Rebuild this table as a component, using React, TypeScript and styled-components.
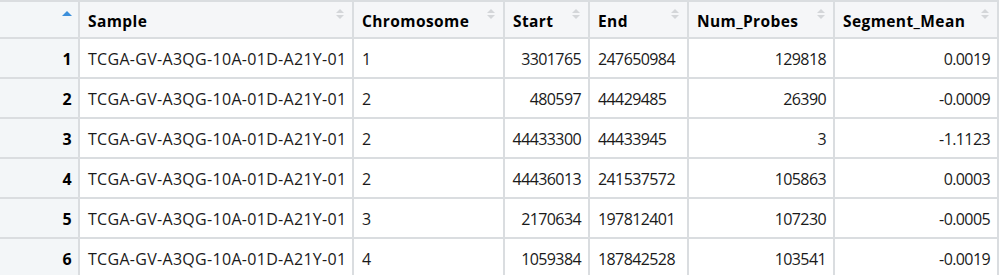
import { Fragment } from 'react';
import styled, { createGlobalStyle } from 'styled-components';

const GlobalStyle = createGlobalStyle`
  body {
    margin: 0;
    background: #ffffff;
    font-family: "Open Sans", "Noto Sans", sans-serif;
  }
`;

const columns = [
  { key: 'Sample', align: 'left', numeric: false },
  { key: 'Chromosome', align: 'left', numeric: false },
  { key: 'Start', align: 'right', numeric: true },
  { key: 'End', align: 'left', numeric: true },
  { key: 'Num_Probes', align: 'right', numeric: true },
  { key: 'Segment_Mean', align: 'right', numeric: true },
] as const;

const rows = [
  ['TCGA-GV-A3QG-10A-01D-A21Y-01', '1', '3301765', '247650984', '129818', '0.0019'],
  ['TCGA-GV-A3QG-10A-01D-A21Y-01', '2', '480597', '44429485', '26390', '-0.0009'],
  ['TCGA-GV-A3QG-10A-01D-A21Y-01', '2', '44433300', '44433945', '3', '-1.1123'],
  ['TCGA-GV-A3QG-10A-01D-A21Y-01', '2', '44436013', '241537572', '105863', '0.0003'],
  ['TCGA-GV-A3QG-10A-01D-A21Y-01', '3', '2170634', '197812401', '107230', '-0.0005'],
  ['TCGA-GV-A3QG-10A-01D-A21Y-01', '4', '1059384', '187842528', '103541', '-0.0019'],
];

const Grid = styled.div`
  display: grid;
  grid-template-columns: 78px 272px 149px 83px 97px 144px 162px;
  grid-auto-rows: 38px;
  grid-template-rows: 35px;
  gap: 2px;
  padding: 2px 2px 0 0;
  width: max-content;
  background: #dadde0;
`;

const HeadCell = styled.div`
  position: relative;
  display: flex;
  align-items: center;
  padding: 3px 8px 0;
  background: #f5f6f8;
  font-weight: 700;
  font-size: 15.5px;
  letter-spacing: 0.4px;
  color: #000;
`;

const IndexHead = styled(HeadCell)`
  background: #f3f6f8;
`;

const SortUp = styled.span`
  position: absolute;
  top: 9px;
  right: 6px;
  width: 0;
  height: 0;
  border-left: 5px solid transparent;
  border-right: 5px solid transparent;
  border-bottom: 5px solid #3b8fdb;
`;

const SortBoth = styled.span`
  position: absolute;
  top: 7px;
  right: 8px;
  display: flex;
  flex-direction: column;
  gap: 2px;
  &::before,
  &::after {
    content: '';
    width: 0;
    height: 0;
    border-left: 4px solid transparent;
    border-right: 4px solid transparent;
  }
  &::before {
    border-bottom: 4px solid #d4d6d9;
  }
  &::after {
    border-top: 4px solid #d4d6d9;
  }
`;

const Cell = styled.div<{ $align: 'left' | 'right'; $numeric?: boolean }>`
  display: flex;
  align-items: center;
  justify-content: ${(p) => (p.$align === 'right' ? 'flex-end' : 'flex-start')};
  padding: 2px ${(p) => (p.$align === 'right' ? '7px' : '8px')} 0 8px;
  background: #ffffff;
  font-size: 16px;
  letter-spacing: ${(p) => (p.$numeric ? '-0.6px' : '0.3px')};
  color: #1a1a1a;
  white-space: nowrap;
  overflow: hidden;
`;

const IndexCell = styled(Cell)`
  background: #f3f6f8;
  font-weight: 700;
  color: #000;
`;

export default function App() {
  return (
    <>
      <GlobalStyle />
      <Grid>
        <IndexHead>
          <SortUp />
        </IndexHead>
        {columns.map((c) => (
          <HeadCell key={c.key}>
            {c.key}
            <SortBoth />
          </HeadCell>
        ))}
        {rows.map((r, i) => (
          <Fragment key={i}>
            <IndexCell $align="right" $numeric>
              {i + 1}
            </IndexCell>
            {r.map((v, j) => (
              <Cell key={j} $align={columns[j].align} $numeric={columns[j].numeric}>
                {v}
              </Cell>
            ))}
          </Fragment>
        ))}
      </Grid>
    </>
  );
}
